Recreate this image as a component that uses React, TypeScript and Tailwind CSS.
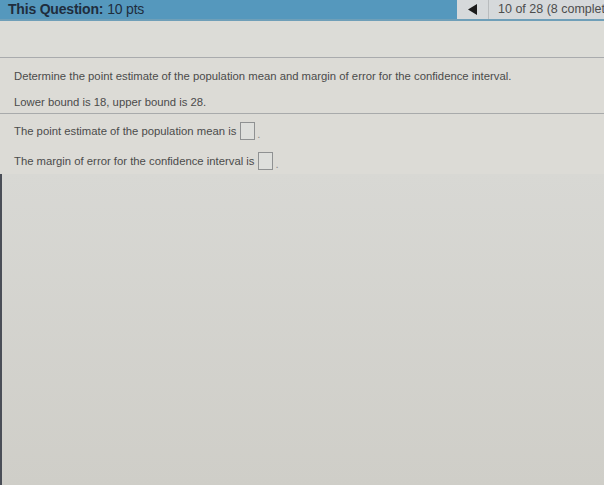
function AnswerBox() {
  return (
    <span className="inline-flex items-end">
      <span className="inline-block w-[15px] h-[18px] border border-[#8f9192] bg-[#dedfdc] ml-[4px]" />
      <span className="text-[#8a8a8a] ml-[2px] leading-none">.</span>
    </span>
  );
}

export default function App() {
  return (
    <div className="w-[604px] h-[485px] overflow-hidden bg-[#d9d8d3] flex flex-col font-['Liberation_Sans',Arial,sans-serif]">
      {/* top bar */}
      <div className="h-[21px] bg-[#5598bd] flex items-stretch justify-between border-b-2 border-[#6f9fb8]">
        <div className="pl-[8px] flex items-center text-[14px] font-bold text-[#1f2d3d] tracking-[-0.2px]">
          This Question:<span className="font-normal ml-[4px]">10 pts</span>
        </div>
        <div className="w-[147px] shrink-0 overflow-hidden bg-[#d6d9db] flex items-center">
          <div className="w-[32px] shrink-0 h-full flex items-center justify-center border-r border-[#b9bcbe]">
            <svg width="9" height="11" viewBox="0 0 9 11">
              <path d="M9 0 L0 5.5 L9 11 Z" fill="#1b1b1b" />
            </svg>
          </div>
          <span className="pl-[9px] whitespace-nowrap text-[12.5px] text-[#4d4d4d]">10 of 28 (8 complete)</span>
        </div>
      </div>

      {/* gray band */}
      <div className="h-[37px] bg-[#dcdcd7] border-b border-[#a9abad]" />

      {/* question */}
      <div className="bg-[#dcdbd6] text-[11.3px] leading-[17px] text-[#4b4b4b] flex flex-col">
        <div className="pl-[14px] pt-[10px] pb-[9px]">
          Determine the point estimate of the population mean and margin of error for the confidence interval.
        </div>
        <div className="pl-[14px] pb-[2px] border-b border-[#a8aaab]">Lower bound is 18, upper bound is 28.</div>
        <div className="pl-[14px] pt-[8px] flex items-center">
          The point estimate of the population mean is
          <AnswerBox />
        </div>
        <div className="pl-[14px] pt-[12px] pb-[4px] flex items-center">
          The margin of error for the confidence interval is
          <AnswerBox />
        </div>
      </div>

      <div className="flex-1 bg-gradient-to-b from-[#d8d8d4] to-[#cfcec8] border-l-2 border-[#4a4e57]" />
    </div>
  );
}
